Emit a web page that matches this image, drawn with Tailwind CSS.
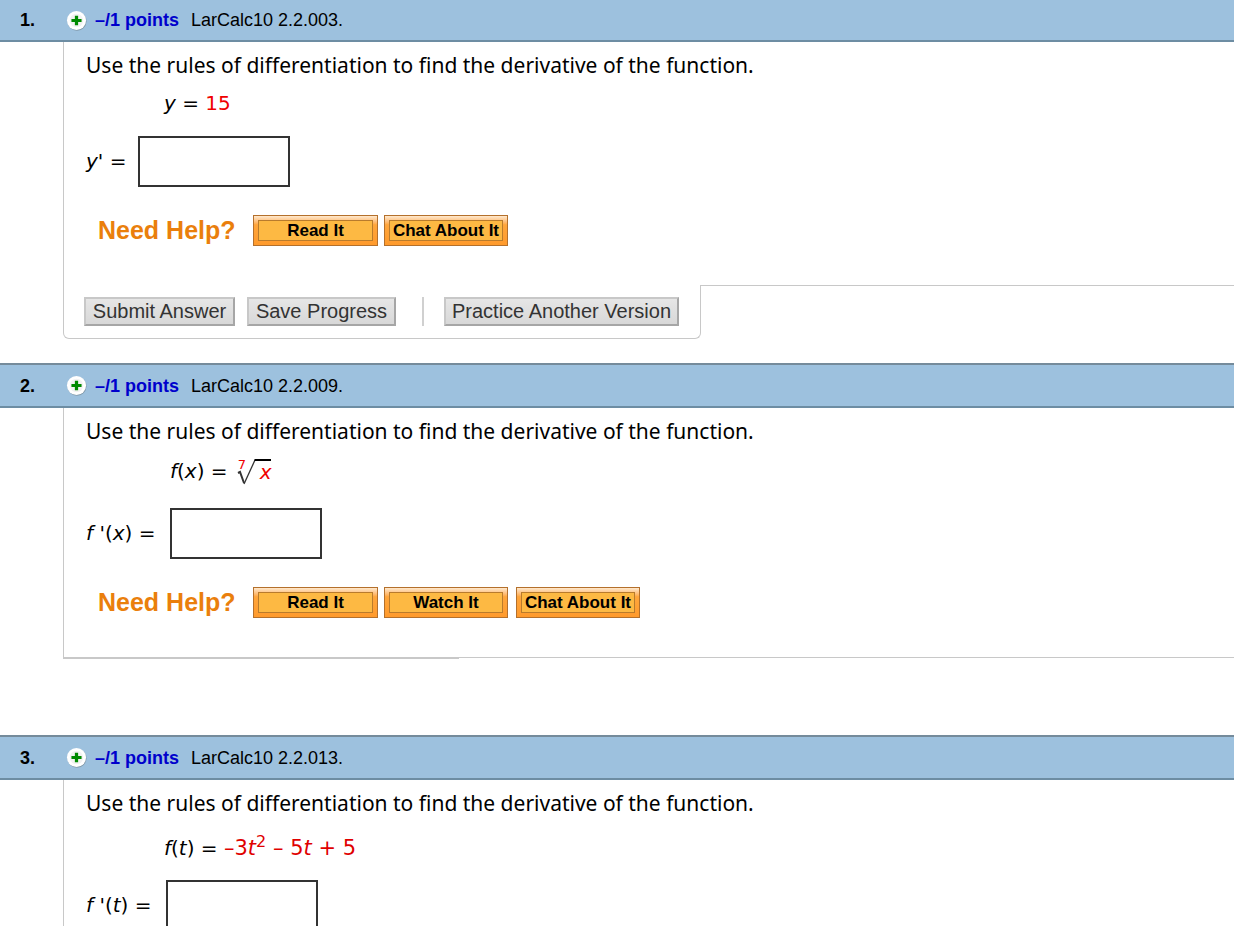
<!DOCTYPE html>
<html lang="en">
<head>
<meta charset="utf-8">
<title>Homework</title>
<script src="https://cdn.jsdelivr.net/npm/@tailwindcss/browser@4"></script>
</head>
<body class="bg-white text-black font-['DejaVu_Sans',sans-serif] text-[20px] leading-6 overflow-x-hidden">
<svg class="hidden">
  <symbol id="plus" viewBox="0 0 22 22">
    <circle cx="11.5" cy="11.8" r="10" fill="#8199a9"/>
    <circle cx="11" cy="11" r="10" fill="#fff"/>
    <circle cx="11" cy="11" r="7" fill="#f2f2f2"/>
    <path d="M9.300 6h3.400v3.300h3.600v3.400h-3.600v3.300h-3.400v-3.300h-3.600v-3.400h3.600z" fill="#008a00"/>
  </symbol>
</svg>
<main>
  <section>
    <header class="flex h-[42px] items-center border-b-2 border-[#6d8da3] bg-[#9dc1de] pl-5 font-['Liberation_Sans',Arial,sans-serif] text-[18px]">
      <h2 class="w-[46px] font-bold">1.</h2>
      <button aria-label="Expand question 1" class="mr-2"><svg class="size-[21px]"><use href="#plus"/></svg></button>
      <a href="#q1" class="mr-3 font-bold text-[#0000cc]">–/1 points</a>
      <span>LarCalc10 2.2.003.</span>
    </header>
    <div class="ml-[63px] h-[243px] border-l border-[#c8c8c8] pl-[22px] pt-[11px]">
      <p class="font-['Noto_Sans',sans-serif] text-[21px]">Use the rules of differentiation to find the derivative of the function.</p>
      <p class="mt-[14px] pl-[78px]"><i>y</i> = <span class="text-[#f00000]">15</span></p>
      <div class="mt-[21px] flex items-center gap-3">
        <label for="a1" class="pb-[2px]"><i>y'</i> =</label>
        <input id="a1" class="h-[51px] w-[152px] border-2 border-[#333] bg-white px-2">
      </div>
      <div class="mt-7 flex items-center gap-[6px] pl-3 font-['Liberation_Sans',Arial,sans-serif] font-bold">
        <span class="w-[149px] pb-[2px] text-[25px] text-[#ea7f0c]">Need Help?</span>
        <button class="h-[31px] w-[125px] border border-[#b4702c] bg-linear-to-b from-[#ffe8cc] via-[#ffa63c] via-30% to-[#ff9a2c] p-1 text-[17px]"><span class="flex h-full items-center justify-center border border-[#b97b2c] bg-[#fdb943]">Read It</span></button>
        <button class="h-[31px] w-[124px] border border-[#b4702c] bg-linear-to-b from-[#ffe8cc] via-[#ffa63c] via-30% to-[#ff9a2c] p-1 text-[17px]"><span class="flex h-full items-center justify-center whitespace-nowrap border border-[#b97b2c] bg-[#fdb943]">Chat About It</span></button>
      </div>
    </div>
    <div class="ml-[63px] flex">
      <div class="flex h-[54px] shrink-0 items-start rounded-b-md border border-t-0 border-[#c8c8c8] pl-5 pr-[21px] pt-3 font-['Liberation_Sans',Arial,sans-serif] text-[#333]">
        <button class="mr-3 h-[29px] w-[151px] border-2 border-t-[#c8c8c8] border-l-[#c8c8c8] border-r-[#a6a6a6] border-b-[#a6a6a6] bg-linear-to-b from-[#e6e6e6] to-[#d8d8d8] pb-[2px]">Submit Answer</button>
        <button class="h-[29px] w-[149px] border-2 border-t-[#c8c8c8] border-l-[#c8c8c8] border-r-[#a6a6a6] border-b-[#a6a6a6] bg-linear-to-b from-[#e6e6e6] to-[#d8d8d8] pb-[2px]">Save Progress</button>
        <div class="ml-[26px] mr-5 h-[29px] border-l-2 border-[#d0d0d0]"></div>
        <button class="h-[29px] w-[235px] border-2 border-t-[#c8c8c8] border-l-[#c8c8c8] border-r-[#a6a6a6] border-b-[#a6a6a6] bg-linear-to-b from-[#e6e6e6] to-[#d8d8d8] pb-[2px]">Practice Another Version</button>
      </div>
      <div class="flex-1 border-t border-[#c8c8c8]"></div>
    </div>
  </section>

  <section class="mt-6">
    <header class="flex h-[45px] items-center border-y-2 border-t-[#758b9b] border-b-[#6d8da3] bg-[#9dc1de] pl-5 font-['Liberation_Sans',Arial,sans-serif] text-[18px]">
      <h2 class="w-[46px] font-bold">2.</h2>
      <button aria-label="Expand question 2" class="mr-2"><svg class="size-[21px]"><use href="#plus"/></svg></button>
      <a href="#q2" class="mr-3 font-bold text-[#0000cc]">–/1 points</a>
      <span>LarCalc10 2.2.009.</span>
    </header>
    <div class="ml-[63px] h-[249px] border-l border-[#c8c8c8] pl-[22px] pt-[11px]">
      <p class="font-['Noto_Sans',sans-serif] text-[21px]">Use the rules of differentiation to find the derivative of the function.</p>
      <div class="mt-[14px] flex h-7 items-center gap-2 pl-[84px]">
        <span><i>f</i>(<i>x</i>) =</span>
        <span class="relative h-7 w-9 text-[#f00000]">
          <svg class="absolute inset-0" width="36" height="28" fill="none" stroke="#333"><path d="M2 16l2-1 4 11" stroke-width="2"/><path d="M8 27L19 3" stroke-width="1.300"/><path d="M18.500 3h16.500" stroke="#000" stroke-width="2"/></svg>
          <sup class="absolute left-[2px] top-[2px] text-[13px] leading-3">7</sup>
          <i class="absolute right-0 top-[3px]">x</i>
        </span>
      </div>
      <div class="mt-[23px] flex items-center gap-[15px]">
        <label for="a2" class="pb-[2px]"><i>f '</i>(<i>x</i>) =</label>
        <input id="a2" class="h-[51px] w-[152px] border-2 border-[#333] bg-white px-2">
      </div>
      <div class="mt-7 flex items-center gap-[6px] pl-3 font-['Liberation_Sans',Arial,sans-serif] font-bold">
        <span class="w-[149px] pb-[2px] text-[25px] text-[#ea7f0c]">Need Help?</span>
        <button class="h-[31px] w-[125px] border border-[#b4702c] bg-linear-to-b from-[#ffe8cc] via-[#ffa63c] via-30% to-[#ff9a2c] p-1 text-[17px]"><span class="flex h-full items-center justify-center border border-[#b97b2c] bg-[#fdb943]">Read It</span></button>
        <button class="mr-[2px] h-[31px] w-[124px] border border-[#b4702c] bg-linear-to-b from-[#ffe8cc] via-[#ffa63c] via-30% to-[#ff9a2c] p-1 text-[17px]"><span class="flex h-full items-center justify-center border border-[#b97b2c] bg-[#fdb943]">Watch It</span></button>
        <button class="h-[31px] w-[124px] border border-[#b4702c] bg-linear-to-b from-[#ffe8cc] via-[#ffa63c] via-30% to-[#ff9a2c] p-1 text-[17px]"><span class="flex h-full items-center justify-center whitespace-nowrap border border-[#b97b2c] bg-[#fdb943]">Chat About It</span></button>
      </div>
    </div>
    <div class="ml-[63px] flex items-start">
      <div class="w-[396px] border-t-2 border-[#c8c8c8]"></div>
      <div class="flex-1 border-t border-[#c8c8c8]"></div>
    </div>
  </section>

  <section class="mt-[76px] h-[191px] overflow-hidden">
    <header class="flex h-[45px] items-center border-y-2 border-t-[#758b9b] border-b-[#6d8da3] bg-[#9dc1de] pl-5 font-['Liberation_Sans',Arial,sans-serif] text-[18px]">
      <h2 class="w-[46px] font-bold">3.</h2>
      <button aria-label="Expand question 3" class="mr-2"><svg class="size-[21px]"><use href="#plus"/></svg></button>
      <a href="#q3" class="mr-3 font-bold text-[#0000cc]">–/1 points</a>
      <span>LarCalc10 2.2.013.</span>
    </header>
    <div class="ml-[63px] border-l border-[#c8c8c8] pl-[22px] pt-[11px]">
      <p class="font-['Noto_Sans',sans-serif] text-[21px]">Use the rules of differentiation to find the derivative of the function.</p>
      <p class="mt-[21px] pl-[78px]"><i>f</i>(<i>t</i>) = <span class="text-[21px] text-[#e00000]">–3<i>t</i><sup class="text-[16px]">2</sup> – 5<i>t</i> + 5</span></p>
      <div class="mt-5 flex items-center gap-[15px]">
        <label for="a3" class="pb-[2px]"><i>f '</i>(<i>t</i>) =</label>
        <input id="a3" class="h-[51px] w-[152px] border-2 border-[#333] bg-white px-2">
      </div>
    </div>
  </section>
</main>
</body>
</html>
